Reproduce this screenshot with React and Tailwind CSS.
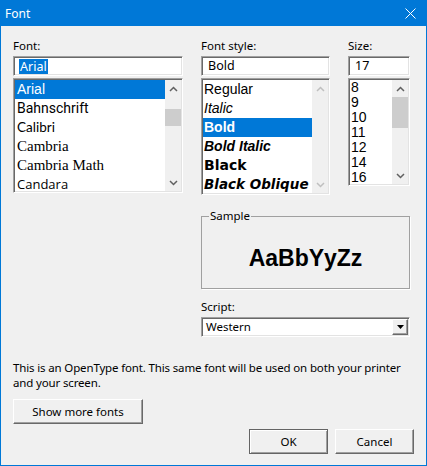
import React from "react";

const ui = "font-['Noto_Sans','Open_Sans',sans-serif]";
const sunken =
  "border border-t-[#a0a0a0] border-l-[#a0a0a0] border-b-white border-r-white shadow-[inset_1px_1px_0_#696969,inset_-1px_-1px_0_#e3e3e3] p-[1px]";
const raised =
  "border border-t-white border-l-white border-b-[#696969] border-r-[#696969] shadow-[inset_-1px_-1px_0_#a0a0a0]";

function Chevron({ up, color }) {
  return (
    <svg width="9" height="6" viewBox="0 0 9 6">
      <polyline
        points={up ? "1,5 4.5,1.5 8,5" : "1,1 4.5,4.5 8,1"}
        fill="none"
        stroke={color}
        strokeWidth="1.5"
      />
    </svg>
  );
}

function ScrollBar({ thumbTop, thumbHeight, disabled }) {
  const c = disabled ? "#bfbfbf" : "#606060";
  return (
    <div className="flex w-[16px] shrink-0 flex-col bg-[#f0f0f0]">
      <div className="flex h-[17px] items-center justify-center">
        <Chevron up color={c} />
      </div>
      <div className="flex-1">
        {!disabled && (
          <div
            className="bg-[#cdcdcd]"
            style={{ marginTop: thumbTop, height: thumbHeight }}
          />
        )}
      </div>
      <div className="flex h-[17px] items-center justify-center">
        <Chevron color={c} />
      </div>
    </div>
  );
}

const fonts = [
  { name: "Arial", cls: "font-['Liberation_Sans',sans-serif] text-[14px]" },
  { name: "Bahnschrift", cls: "font-['Roboto',sans-serif] text-[14px]" },
  { name: "Calibri", cls: "font-['Lato',sans-serif] text-[13.5px]" },
  { name: "Cambria", cls: "font-['Liberation_Serif',serif] text-[15px]" },
  { name: "Cambria Math", cls: "font-['Liberation_Serif',serif] text-[15px]" },
  { name: "Candara", cls: "font-['Open_Sans',sans-serif] text-[13px]" },
];

const styles = [
  { name: "Regular", cls: "font-['Liberation_Sans',sans-serif] text-[14px]" },
  { name: "Italic", cls: "font-['Liberation_Sans',sans-serif] text-[14px] italic" },
  { name: "Bold", cls: "font-['Liberation_Sans',sans-serif] text-[14px] font-bold" },
  { name: "Bold Italic", cls: "font-['Liberation_Sans',sans-serif] text-[14px] font-bold italic" },
  { name: "Black", cls: "font-['DejaVu_Sans',sans-serif] text-[14px] font-bold" },
  { name: "Black Oblique", cls: "font-['DejaVu_Sans',sans-serif] text-[13.5px] font-bold italic" },
];

const sizes = ["8", "9", "10", "11", "12", "14", "16"];

export default function App() {
  return (
    <div
      className={`flex h-[466px] w-[427px] flex-col overflow-hidden border border-[#0078d7] bg-[#f0f0f0] text-[11.5px] text-black ${ui}`}
    >
      {/* title bar */}
      <div className="flex h-[25px] shrink-0 items-center justify-between bg-[#0078d7] pl-[4px] pr-[10px] text-[12px] text-white">
        <span>Font</span>
        <svg width="11" height="11" viewBox="0 0 11 11">
          <path d="M0.5 0.5 L10.5 10.5 M10.5 0.5 L0.5 10.5" stroke="white" strokeWidth="1" />
        </svg>
      </div>

      <div className="flex shrink-0 flex-col px-[12px] pt-[12px]">
        <div className="flex items-start gap-[18px]">
          {/* font */}
          <div className="flex w-[170px] flex-col">
            <div className="h-[18px] leading-[16px]">Font:</div>
            <div className={`h-[20px] ${sunken}`}>
              <div className="flex h-full items-center bg-white pl-[4px] text-[12.5px]">
                <span className="bg-[#0078d7] px-[1px] leading-[15px] text-white">Arial</span>
              </div>
            </div>
            <div className={`mt-[2px] flex h-[115px] ${sunken}`}>
              <div className="flex-1 overflow-hidden bg-white">
                {fonts.map((f, i) => (
                  <div
                    key={f.name}
                    className={`h-[19px] whitespace-nowrap pl-[2px] leading-[19px] ${f.cls} ${
                      i === 0 ? "bg-[#0078d7] text-white" : ""
                    }`}
                  >
                    {f.name}
                  </div>
                ))}
              </div>
              <ScrollBar thumbTop={12} thumbHeight={17} />
            </div>
          </div>

          {/* style */}
          <div className="flex w-[129px] flex-col">
            <div className="h-[18px] leading-[16px]">Font style:</div>
            <div className={`h-[20px] ${sunken}`}>
              <div className="flex h-full items-center bg-white pl-[5px] text-[12.5px]">Bold</div>
            </div>
            <div className={`mt-[2px] flex h-[117px] ${sunken}`}>
              <div className="flex-1 overflow-hidden bg-white">
                {styles.map((s, i) => (
                  <div
                    key={s.name}
                    className={`h-[19px] whitespace-nowrap pl-[1px] leading-[19px] ${s.cls} ${
                      i === 2 ? "bg-[#0078d7] text-white" : ""
                    }`}
                  >
                    {s.name}
                  </div>
                ))}
              </div>
              <ScrollBar disabled />
            </div>
          </div>

          {/* size */}
          <div className="flex w-[62px] flex-col">
            <div className="h-[18px] leading-[16px]">Size:</div>
            <div className={`h-[20px] ${sunken}`}>
              <div className="flex h-full items-center bg-white pl-[5px] text-[12.5px]">17</div>
            </div>
            <div className={`mt-[2px] flex h-[108px] ${sunken}`}>
              <div className="flex-1 overflow-hidden bg-white">
                {sizes.map((s) => (
                  <div
                    key={s}
                    className="h-[15px] pl-[1px] font-['Liberation_Sans',sans-serif] text-[14px] leading-[15px]"
                  >
                    {s}
                  </div>
                ))}
              </div>
              <ScrollBar thumbTop={0} thumbHeight={31} />
            </div>
          </div>
        </div>

        {/* sample + script */}
        <div className="ml-[188px] flex w-[209px] flex-col">
          <fieldset className="mt-[13px] h-[81px] border border-[#a0a0a0] shadow-[1px_1px_0_white]">
            <legend className="ml-[7px] px-[1px] leading-[16px]">Sample</legend>
            <div className="mt-[20px] text-center font-['Liberation_Sans',sans-serif] text-[23px] font-bold leading-[28px]">
              AaBbYyZz
            </div>
          </fieldset>
          <div className="mt-[10px] h-[18px] leading-[16px]">Script:</div>
          <div className={`flex h-[20px] ${sunken}`}>
            <div className="flex flex-1 items-center bg-white pl-[3px]">Western</div>
            <div className={`flex w-[16px] items-center justify-center bg-[#f0f0f0] ${raised}`}>
              <svg width="7" height="4" viewBox="0 0 7 4">
                <path d="M0 0 L7 0 L3.5 4 Z" fill="black" />
              </svg>
            </div>
          </div>
        </div>

        {/* description */}
        <div className="mt-[23px] whitespace-nowrap leading-[15px] tracking-[-0.15px]">
          This is an OpenType font. This same font will be used on both your printer
          <br />
          and your screen.
        </div>

        <div>
          <button className={`mt-[9px] h-[25px] w-[130px] bg-[#f0f0f0] ${raised}`}>Show more fonts</button>
        </div>

        <div className="mt-[5px] flex justify-end gap-[7px]">
          <button className="h-[25px] w-[79px] border border-[#646464] bg-[#f0f0f0] shadow-[inset_1px_1px_0_white,inset_-1px_-1px_0_#a0a0a0]">
            OK
          </button>
          <button className={`h-[25px] w-[79px] bg-[#f0f0f0] ${raised}`}>Cancel</button>
        </div>
      </div>
    </div>
  );
}
